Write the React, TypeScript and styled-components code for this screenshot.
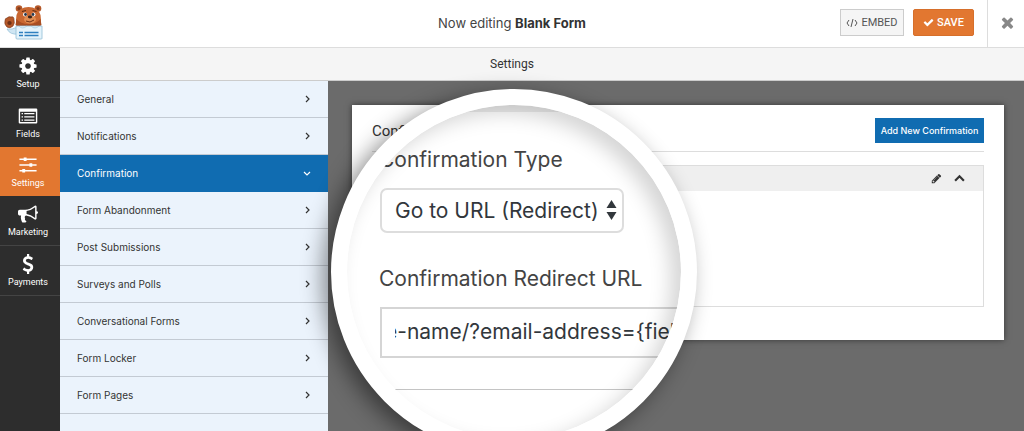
import React from "react";
import styled, { createGlobalStyle } from "styled-components";

const GlobalStyle = createGlobalStyle`
  *, *::before, *::after { box-sizing: border-box; }
  body {
    margin: 0;
    background: #6b6b6b;
    color: #444;
    font-family: Roboto, "Liberation Sans", sans-serif;
    font-size: 12px;
  }
  button, input, select { font: inherit; color: inherit; margin: 0; }
  h1, h2, p, ul { margin: 0; padding: 0; font-weight: 400; }
  a { color: inherit; text-decoration: none; }
`;

const Page = styled.div`
  min-height: 100vh;
  display: flex;
  flex-direction: column;
  overflow: hidden;
`;

const Header = styled.header`
  display: grid;
  grid-template-columns: 60px 1fr 147px 37px;
  align-items: center;
  height: 48px;
  background: #fff;
  border-bottom: 1px solid #ddd;
`;

const Logo = styled.svg`
  display: block;
  align-self: start;
  width: 40px;
  height: 36px;
  margin: 4px 0 0 4px;
`;

const FormName = styled.h1`
  font-family: Inter, "Liberation Sans", sans-serif;
  font-size: 13px;
  line-height: 20px;
  text-align: center;
  padding: 0 0 2px 124px;
  strong { font-weight: 700; color: #333; }
`;

const Actions = styled.div`
  display: flex;
  gap: 9px;
  padding-bottom: 2px;
`;

const ToolButton = styled.button<{ $primary?: boolean }>`
  display: flex;
  align-items: center;
  justify-content: center;
  gap: 3px;
  width: ${(p) => (p.$primary ? 61 : 64)}px;
  height: 27px;
  padding: 0;
  font-size: 11px;
  font-weight: ${(p) => (p.$primary ? 500 : 400)};
  color: ${(p) => (p.$primary ? "#fff" : "#555")};
  background: ${(p) => (p.$primary ? "#e27730" : "#f5f5f5")};
  border: 1px solid ${(p) => (p.$primary ? "#d66f2b" : "#ccc")};
  border-radius: ${(p) => (p.$primary ? 2 : 0)}px;
`;

const CloseButton = styled.button`
  display: flex;
  align-items: center;
  justify-content: center;
  height: 47px;
  padding: 0 0 2px 3px;
  color: #888;
  background: none;
  border: 0;
  border-left: 1px solid #ddd;
`;

const Glyph = styled.svg<{ $size: number }>`
  display: block;
  flex: none;
  width: ${(p) => p.$size}px;
  height: ${(p) => p.$size}px;
  fill: currentColor;
`;

const Builder = styled.div`
  flex: 1;
  display: flex;
`;

const Rail = styled.nav`
  flex: none;
  width: 60px;
  background: #2d2d2d;
`;

const RailLink = styled.a<{ $active?: boolean; $divider?: boolean }>`
  display: flex;
  flex-direction: column;
  align-items: center;
  gap: 2px;
  padding: 8px 4px 0 0;
  height: ${(p) => (p.$divider ? 50 : 49)}px;
  font-size: 9px;
  line-height: 12px;
  color: #fff;
  background: ${(p) => (p.$active ? "#e27730" : "transparent")};
  border-bottom: ${(p) => (p.$divider ? "1px solid #444" : "0")};
`;

const Workspace = styled.div`
  flex: 1;
  min-width: 0;
  display: flex;
  flex-direction: column;
`;

const SectionBar = styled.h2`
  height: 33px;
  line-height: 32px;
  font-size: 12px;
  text-align: center;
  padding-right: 60px;
  color: #333;
  background: #f5f5f5;
  border-bottom: 1px solid #ccc;
`;

const Columns = styled.div`
  flex: 1;
  display: flex;
`;

const Menu = styled.ul`
  flex: none;
  width: 268px;
  list-style: none;
  background: #ebf3fc;
`;

const MenuLink = styled.a<{ $active?: boolean }>`
  display: flex;
  align-items: center;
  justify-content: space-between;
  height: 37px;
  padding: 0 16px 0 17px;
  font-family: Inter, "Liberation Sans", sans-serif;
  font-size: 10px;
  line-height: 14px;
  color: ${(p) => (p.$active ? "#fff" : "#333")};
  background: ${(p) => (p.$active ? "#106cb1" : "transparent")};
  border-bottom: 1px solid ${(p) => (p.$active ? "#106cb1" : "#c3cad3")};
`;

const Stage = styled.main`
  position: relative;
  flex: 1;
  min-width: 0;
  padding: 24px 20px 24px 24px;
  background: #6b6b6b;
`;

const Card = styled.section`
  padding: 13px 20px 33px;
  background: #fff;
  box-shadow: 0 0 6px rgba(0, 0, 0, 0.5);
`;

const CardHead = styled.div`
  display: flex;
  align-items: center;
  justify-content: space-between;
  padding-bottom: 8px;
  border-bottom: 1px solid #ddd;
`;

const CardTitle = styled.h2`
  font-size: 15px;
  line-height: 20px;
  color: #333;
`;

const AddButton = styled.button`
  width: 109px;
  height: 25px;
  padding: 0;
  font-family: Inter, "Liberation Sans", sans-serif;
  font-size: 9px;
  font-weight: 500;
  color: #fff;
  background: #106cb1;
  border: 0;
  white-space: nowrap;
`;

const Block = styled.div`
  height: 142px;
  margin-top: 13px;
  border: 1px solid #ddd;
`;

const BlockHead = styled.div`
  display: flex;
  align-items: center;
  justify-content: flex-end;
  gap: 12px;
  height: 25px;
  padding-right: 18px;
  background: #efefef;
  color: #333;
`;

const IconButton = styled.button`
  padding: 0;
  background: none;
  border: 0;
`;

const Lens = styled.div`
  position: absolute;
  top: 8px;
  left: 3px;
  width: 366px;
  height: 366px;
  border: 16px solid #fff;
  border-radius: 50%;
  background: #fff;
  font-family: Inter, "Liberation Sans", sans-serif;
  box-shadow: -8px 6px 22px rgba(0, 0, 0, 0.45);
`;

const LensView = styled.div`
  height: 334px;
  border-radius: 50%;
  overflow: hidden;
  position: relative;
  &::after {
    content: "";
    position: absolute;
    inset: 0;
    border-radius: 50%;
    box-shadow: inset -10px 8px 20px rgba(0, 0, 0, 0.17);
    pointer-events: none;
  }
`;

const LensForm = styled.form`
  padding: 34px 0 0 32px;
  border-top: 7px solid #ececec;
  color: #444;
`;

const FieldLabel = styled.label`
  display: block;
  font-size: 21px;
  line-height: 28px;
  white-space: nowrap;
`;

const SelectWrap = styled.div`
  position: relative;
  width: 244px;
  margin: 14px 0 32px 1px;
  color: #32373c;
  svg {
    position: absolute;
    right: 7px;
    top: 11px;
    pointer-events: none;
  }
`;

const Select = styled.select`
  display: block;
  appearance: none;
  width: 100%;
  height: 45px;
  padding: 0 20px 0 13px;
  font-size: 21px;
  background: #fff;
  border: 2px solid #ddd;
  border-radius: 7px;
`;

const UrlInput = styled.input`
  display: block;
  width: 340px;
  height: 51px;
  margin: 14px 0 31px 1px;
  padding: 0 14px 2px 13px;
  font-size: 21px;
  text-indent: -10px;
  color: #32373c;
  background: #fff;
  border: 2px solid #d5d5d5;
`;

const Rule = styled.hr`
  margin: 0 0 0 15px;
  border: 0;
  border-top: 1px solid #c4c4c4;
`;

const paths = {
  cog: "M1152 896q0-106-75-181t-181-75-181 75-75 181 75 181 181 75 181-75 75-181zm512-109v222q0 12-8 23t-20 13l-185 28q-19 54-39 91 35 50 107 138 10 12 10 25t-9 23q-27 37-99 108t-94 71q-12 0-26-9l-138-108q-44 23-91 38-16 136-29 186-7 28-36 28h-222q-14 0-24.5-8.500t-11.500-21.500l-28-184q-49-16-90-37l-141 107q-10 9-25 9-14 0-25-11-126-114-165-168-7-10-7-23 0-12 8-23 15-21 51-66.500t54-70.500q-27-50-41-99l-183-27q-13-2-21-12.500t-8-23.500v-222q0-12 8-23t19-13l186-28q14-46 39-92-40-57-107-138-10-12-10-24 0-10 9-23 26-36 98.500-107.500t94.500-71.500q13 0 26 10l138 107q44-23 91-38 16-136 29-186 7-28 36-28h222q14 0 24.500 8.500t11.500 21.500l28 184q49 16 90 37l142-107q9-9 24-9 13 0 25 10 129 119 165 170 7 8 7 22 0 12-8 23-15 21-51 66.500t-54 70.500q26 50 41 98l183 28q13 2 21 12.500t8 23.500z",
  list: "M160 224h1472q96 0 96 96v1152q0 96-96 96h-1472q-96 0-96-96v-1152q0-96 96-96zM190 512v930h1412v-930zM320 620h128v128h-128zM560 620h912v128h-912zM320 910h128v128h-128zM560 910h912v128h-912zM320 1200h128v128h-128zM560 1200h912v128h-912z",
  sliders: "M128 320h384v-96h256v96h896v128h-896v96h-256v-96h-384zM128 832h896v-96h256v96h384v128h-384v96h-256v-96h-896zM128 1344h256v-96h256v96h1024v128h-1024v96h-256v-96h-256z",
  bullhorn: "M1664 640q53 0 90.500 37.500t37.500 90.500-37.500 90.500-90.500 37.500v384q0 52-38 90t-90 38q-417-347-812-380-58 19-91 66t-31 100.500 40 92.500q-20 33-23 65.500t6 58 33.500 55 48 50 61.500 50.500q-29 58-111.500 83t-168.500 11.500-132-55.500q-7-23-29.500-87.500t-32-94.500-23-89-15-101 3.500-98.500 22-110.500h-122q-66 0-113-47t-47-113v-192q0-66 47-113t113-47h480q435 0 896-384 52 0 90 38t38 90v384zm-128 604v-954q-394 302-768 343v270q377 42 768 341z",
  dollar: "M1362 1185q0 153-99.500 263.500t-258.500 136.500v175q0 14-9 23t-23 9h-135q-13 0-22.500-9.500t-9.500-22.500v-175q-66-9-127.500-31t-101.500-44.500-74-48-46.500-37.500-17.500-18q-17-21-2-41l103-135q7-10 23-12 15-2 24 9l2 2q113 99 243 125 37 8 74 8 81 0 142.500-43t61.500-122q0-28-15-53t-33.500-42-58.500-37.500-66-32-80-32.500q-39-16-61.500-25t-61.500-26.500-62.500-31-56.500-35.500-53.500-42.500-43.500-49-35.500-58-21-66.500-8.500-78q0-138 98-242t255-134v-180q0-13 9.500-22.500t22.500-9.500h135q14 0 23 9t9 23v176q57 6 110.500 23t87 33.500 63.500 37.500 39 29 15 14q17 18 5 38l-81 146q-8 15-23 16-14 3-27-7-3-3-14.500-12t-39-26.500-58.500-32-74.500-26-85.500-11.500q-95 0-155 43t-60 111q0 26 8.500 48t29.500 41.500 39.500 33 56 31 60.500 27 70 27.500q53 20 81 31.500t76 35 75.500 42.500 62 50 53 63.500 31.500 76.500 13 94z",
  times: "M1490 1322q0 40-28 68l-136 136q-28 28-68 28t-68-28l-294-294-294 294q-28 28-68 28t-68-28l-136-136q-28-28-28-68t28-68l294-294-294-294q-28-28-28-68t28-68l136-136q28-28 68-28t68 28l294 294 294-294q28-28 68-28t68 28l136 136q28 28 28 68t-28 68l-294 294 294 294q28 28 28 68z",
  check: "M1671 566q0 40-28 68l-724 724-136 136q-28 28-68 28t-68-28l-136-136-362-362q-28-28-28-68t28-68l136-136q28-28 68-28t68 28l294 295 656-657q28-28 68-28t68 28l136 136q28 28 28 68z",
  pencil: "M491 1536l91-91-235-235-91 91v107h128v128h107zm523-928q0-22-22-22-10 0-17 7l-542 542q-7 7-7 17 0 22 22 22 10 0 17-7l542-542q7-7 7-17zm-54-192l416 416-832 832h-416v-416zm683 96q0 53-37 90l-166 166-416-416 166-165q36-38 90-38 53 0 91 38l235 234q37 39 37 91z",
};

function Icon({ name, size }: { name: keyof typeof paths; size: number }) {
  return (
    <Glyph $size={size} viewBox="0 0 1792 1792" aria-hidden="true">
      <path fillRule="evenodd" d={paths[name]} />
    </Glyph>
  );
}

const chevrons = { right: "M4 2l3 3-3 3", down: "M2 4l3 3 3-3", up: "M1 7l4-4 4 4" };

function Chevron({ to, size = 10, weight = 1.2 }: { to: keyof typeof chevrons; size?: number; weight?: number }) {
  return (
    <Glyph $size={size} viewBox="0 0 10 10" aria-hidden="true">
      <path d={chevrons[to]} fill="none" stroke="currentColor" strokeWidth={weight} />
    </Glyph>
  );
}

function Bear() {
  return (
    <Logo viewBox="0 0 40 36" role="img" aria-label="WPForms">
      <circle cx="15" cy="4.500" r="3.300" fill="#b5592a" />
      <circle cx="34" cy="4.500" r="3.300" fill="#b5592a" />
      <circle cx="15" cy="4.500" r="1.500" fill="#7f3a1b" />
      <circle cx="34" cy="4.500" r="1.500" fill="#7f3a1b" />
      <path d="M3 25q3 6 11 5v-7l-6 2z" fill="#cfe6f3" stroke="#8fbdd6" strokeWidth=".7" />
      <path d="M1 17q0-3 2-3 2-2 4-1 3-1 3 3 1 3-1 6-3 3-6 1-3-3-2-6z" fill="#b5592a" stroke="#7f3a1b" strokeWidth=".7" />
      <ellipse cx="5.500" cy="19" rx="2.200" ry="2" fill="#6d3016" />
      <path d="M12.500 22q-1-6 0-11 3-8 12-8t12 8q1 5 0 11-6 4-12 4t-12-4z" fill="#c96731" />
      <path d="M12.500 15l-1 6 5 3h16l5-3-1-6q-4 5-12 5t-12-5z" fill="#a84e22" />
      <ellipse cx="26" cy="15.500" rx="6" ry="4" fill="#e08c52" />
      <circle cx="21" cy="10.500" r="2" fill="#fff" />
      <circle cx="29.500" cy="10.500" r="2" fill="#fff" />
      <circle cx="21.500" cy="10.500" r="1.400" fill="#24364b" />
      <circle cx="29" cy="10.500" r="1.400" fill="#24364b" />
      <path d="M18 7.500l4-1M28.500 6.500l4 1" stroke="#5f2a12" strokeWidth="1.100" />
      <ellipse cx="26" cy="13" rx="2.200" ry="1.400" fill="#3c241b" />
      <path d="M22 17q4 2.500 8-1" fill="none" stroke="#6d3016" strokeWidth="1" />
      <path d="M12 22h26v12.500q0 .5-1 .5H13q-1 0-1-1z" fill="#e4f3fb" stroke="#8fbdd6" strokeWidth=".8" />
      <path d="M15 22q3 4 8 0M27 22q4 4 8 0" fill="#cfe6f3" stroke="#a5cbe0" strokeWidth=".7" />
      <path d="M15 28.500h4M15 31.500h4M20.500 28.500h14M20.500 31.500h14" stroke="#2f80bf" strokeWidth="1.400" />
    </Logo>
  );
}

const railItems = [
  { label: "Setup", icon: "cog", divider: true },
  { label: "Fields", icon: "list" },
  { label: "Settings", icon: "sliders", active: true },
  { label: "Marketing", icon: "bullhorn", divider: true },
  { label: "Payments", icon: "dollar", divider: true },
] as { label: string; icon: keyof typeof paths; active?: boolean; divider?: boolean }[];

const menuItems = [
  "General",
  "Notifications",
  "Confirmation",
  "Form Abandonment",
  "Post Submissions",
  "Surveys and Polls",
  "Conversational Forms",
  "Form Locker",
  "Form Pages",
];

export default function App() {
  return (
    <Page>
      <GlobalStyle />
      <Header>
        <Bear />
        <FormName>
          Now editing <strong>Blank Form</strong>
        </FormName>
        <Actions>
          <ToolButton type="button">
            <Glyph $size={12} viewBox="0 0 12 12" aria-hidden="true">
              <path d="M3 3L1 6l2 3M9 3l2 3-2 3M7 2L5 10" fill="none" stroke="currentColor" />
            </Glyph>
            EMBED
          </ToolButton>
          <ToolButton type="button" $primary>
            <Icon name="check" size={11} />
            SAVE
          </ToolButton>
        </Actions>
        <CloseButton type="button" aria-label="Close">
          <Icon name="times" size={17} />
        </CloseButton>
      </Header>
      <Builder>
        <Rail>
          {railItems.map((item) => (
            <RailLink key={item.label} href="#" $active={item.active} $divider={item.divider}>
              <Icon name={item.icon} size={20} />
              {item.label}
            </RailLink>
          ))}
        </Rail>
        <Workspace>
          <SectionBar>Settings</SectionBar>
          <Columns>
            <Menu>
              {menuItems.map((label) => {
                const active = label === "Confirmation";
                return (
                  <li key={label}>
                    <MenuLink href="#" $active={active}>
                      {label}
                      <Chevron to={active ? "down" : "right"} />
                    </MenuLink>
                  </li>
                );
              })}
            </Menu>
            <Stage>
              <Card>
                <CardHead>
                  <CardTitle>Confirmations</CardTitle>
                  <AddButton type="button">Add New Confirmation</AddButton>
                </CardHead>
                <Block>
                  <BlockHead>
                    <IconButton type="button" aria-label="Rename">
                      <Icon name="pencil" size={11} />
                    </IconButton>
                    <IconButton type="button" aria-label="Collapse">
                      <Chevron to="up" size={11} weight={2} />
                    </IconButton>
                  </BlockHead>
                </Block>
              </Card>
              <Lens>
                <LensView>
                  <LensForm>
                    <FieldLabel htmlFor="type">Confirmation Type</FieldLabel>
                    <SelectWrap>
                      <Select id="type">
                        <option>Go to URL (Redirect)</option>
                      </Select>
                      <svg width="11" height="22" viewBox="0 0 11 22" aria-hidden="true">
                        <path d="M5.500 1l5 8h-10zM5.500 21l5-8h-10z" fill="currentColor" />
                      </svg>
                    </SelectWrap>
                    <FieldLabel htmlFor="url">Confirmation Redirect URL</FieldLabel>
                    <UrlInput id="url" type="text" defaultValue="e-name/?email-address={field_id}" />
                    <Rule />
                  </LensForm>
                </LensView>
              </Lens>
            </Stage>
          </Columns>
        </Workspace>
      </Builder>
    </Page>
  );
}
